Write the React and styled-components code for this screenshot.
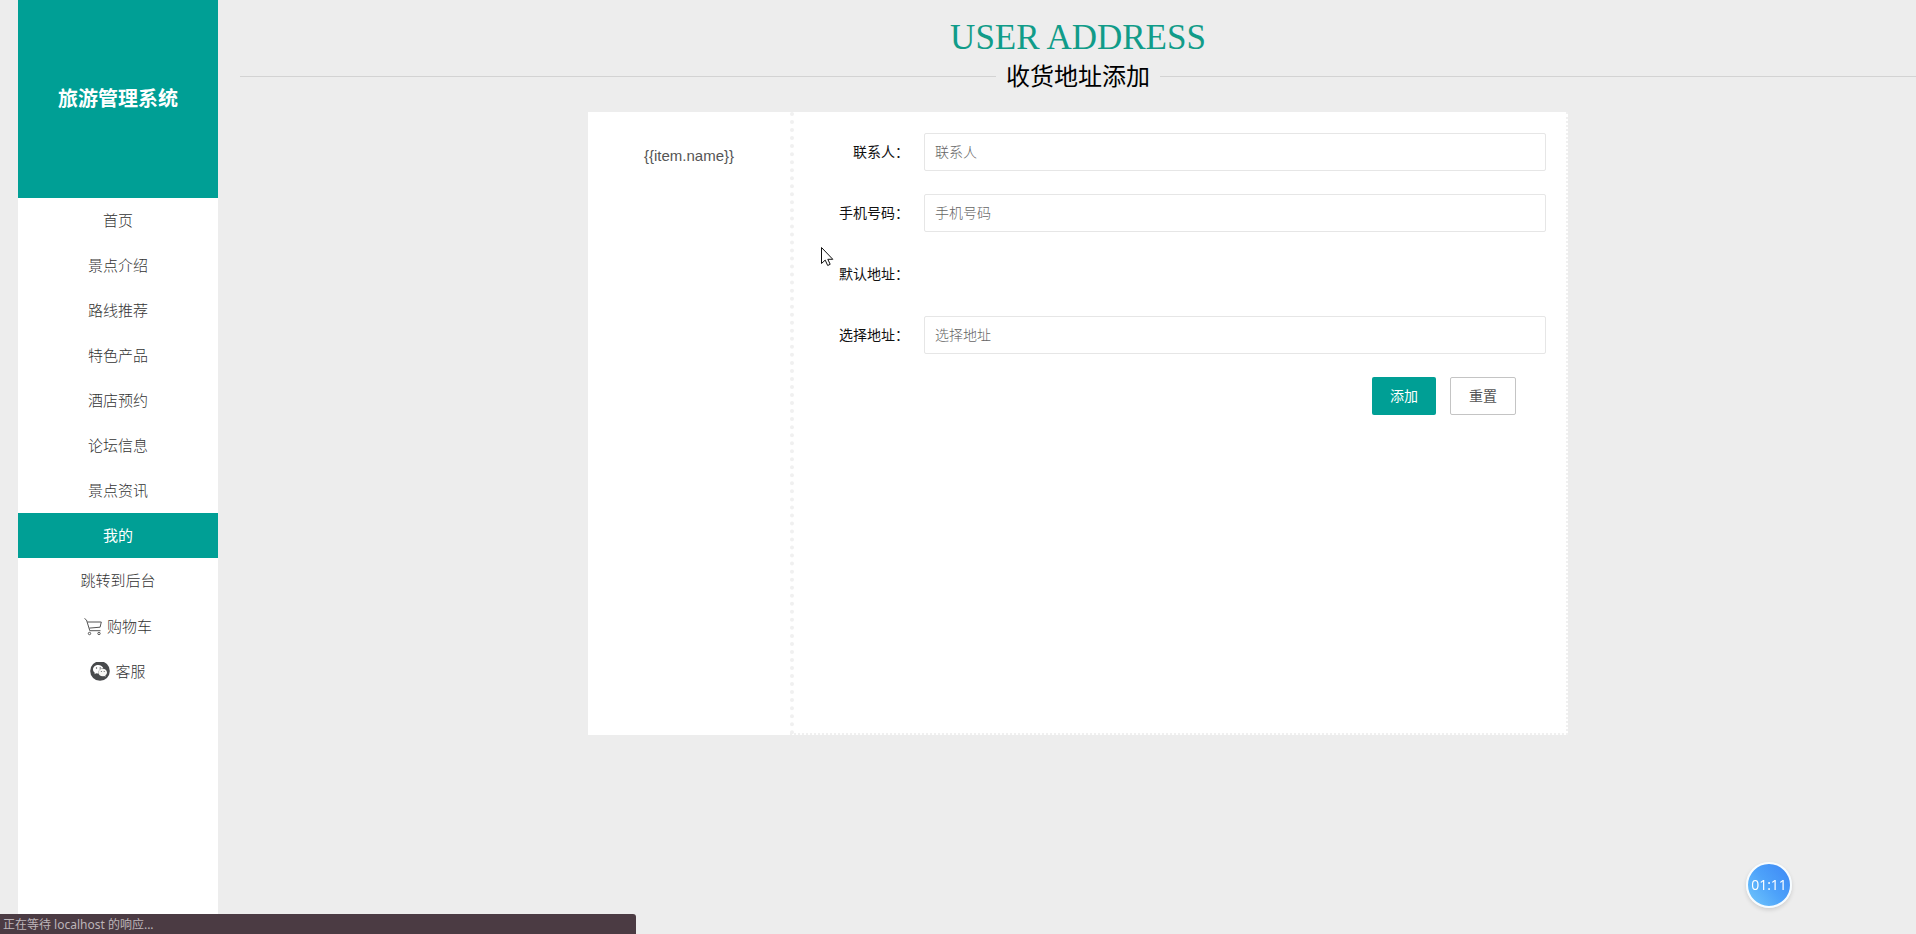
import React from "react";
import styled, { createGlobalStyle, css } from "styled-components";

const teal = "#009f95";

const GlobalStyle = createGlobalStyle`
  *, *::before, *::after { box-sizing: border-box; }
  body {
    margin: 0;
    background: #ededed;
    color: #111;
    font: 300 14px/20px "Liberation Sans", "Noto Sans CJK SC", sans-serif;
  }
  input, button { font: inherit; }
`;

const Page = styled.div`
  display: flex;
  gap: 22px;
  min-height: 100vh;
  padding-left: 18px;
`;

const Sidebar = styled.aside`
  flex: 0 0 200px;
  background: #fff;
`;

const Brand = styled.h1`
  display: flex;
  align-items: center;
  justify-content: center;
  height: 198px;
  margin: 0;
  background: ${teal};
  color: #fff;
  font-size: 20px;
  font-weight: 700;
`;

const NavLink = styled.a`
  display: flex;
  align-items: center;
  justify-content: center;
  gap: 5px;
  height: 45px;
  font-size: 15px;
  text-decoration: none;
  color: #333;
  ${({ $active }) => $active && css`
    background: ${teal};
    color: #fff;
    font-weight: 400;
  `}
`;

const ServiceNav = styled.div`
  padding-top: 1px;
`;

const Main = styled.main`
  flex: 1;
  min-width: 0;
`;

const Heading = styled.header`
  padding-top: 16px;
  text-align: center;
`;

const EnglishTitle = styled.p`
  margin: 0;
  font: 35px/44px "Liberation Serif", serif;
  color: #119c89;
`;

const TitleRow = styled.div`
  display: flex;
  align-items: center;
  gap: 10px;
  &::before, &::after {
    content: "";
    flex: 1;
    height: 1px;
    margin-bottom: 2px;
    background: #d3d3d3;
  }
`;

const Title = styled.h2`
  margin: 0;
  font-size: 24px;
  line-height: 34px;
  font-weight: 400;
  color: #000;
`;

const Card = styled.section`
  display: flex;
  max-width: 980px;
  min-height: 623px;
  margin: 18px auto 0;
  background: #fff;
`;

const Aside = styled.nav`
  flex: 0 0 202px;
  padding-top: 24px;
`;

const AsideLink = styled.a`
  display: block;
  line-height: 40px;
  text-align: center;
  color: #555;
  text-decoration: none;
  font-size: 15px;
`;

const Form = styled.form`
  display: flex;
  flex-direction: column;
  gap: 23px;
  flex: 1;
  min-width: 0;
  padding: 21px 20px 20px 15px;
  border: 2px dotted #f0f0f0;
  border-width: 0 2px 2px 4px;
`;

const Field = styled.div`
  display: flex;
  align-items: center;
  height: 38px;
`;

const Label = styled.label`
  flex: 0 0 115px;
  padding-right: 15px;
  text-align: right;
  white-space: nowrap;
  font-weight: 400;
`;

const Input = styled.input`
  flex: 1;
  min-width: 0;
  height: 38px;
  padding: 0 10px;
  border: 1px solid #e6e6e6;
  border-radius: 2px;
  background: #fff;
  outline: none;
  &::placeholder { color: #656565; opacity: 1; }
`;

const Actions = styled.div`
  display: flex;
  justify-content: flex-end;
  gap: 14px;
  padding-right: 30px;
`;

const Button = styled.button`
  height: 38px;
  padding: 0 18px;
  border: ${({ $primary }) => ($primary ? "0" : "1px solid #c4c4c4")};
  border-radius: 2px;
  background: ${({ $primary }) => ($primary ? teal : "#fff")};
  color: ${({ $primary }) => ($primary ? "#fff" : "#555")};
  font-weight: 400;
  cursor: pointer;
`;

const StatusBar = styled.div`
  position: fixed;
  left: 0;
  bottom: 0;
  width: 636px;
  max-width: 100%;
  height: 20px;
  padding-left: 3px;
  border-radius: 0 3px 0 0;
  background: #4b3b43;
  color: #bdb5b9;
  font: 12px/22px "Noto Sans", "Noto Sans CJK SC", sans-serif;
`;

const Timer = styled.div`
  position: fixed;
  right: 124px;
  bottom: 26px;
  width: 46px;
  height: 46px;
  border: 2px solid #f7fcff;
  border-radius: 50%;
  background: linear-gradient(50deg, #72c8fb, #4da2fa 50%, #3d87f5);
  box-shadow: 0 2px 4px #0002;
  color: #fff;
  font: 14px/42px "Open Sans", sans-serif;
  text-align: center;
`;

const Pointer = styled.svg`
  position: absolute;
  left: 820px;
  top: 246px;
  pointer-events: none;
`;

const CartIcon = () => (
  <svg width="18" height="18" viewBox="0 0 18 18" fill="none" stroke="#555" strokeWidth="1" aria-hidden="true">
    <path d="M.5.5 2.500 2l3.300 10.700h10.700M3.300 4h14l-1.200 5.200-10.800.9" />
    <circle cx="5.500" cy="15.500" r="1.200" />
    <circle cx="15" cy="15.500" r="1.200" />
  </svg>
);

const WechatIcon = () => (
  <svg width="20" height="20" viewBox="0 0 20 20" aria-hidden="true">
    <circle cx="10" cy="9" r="9.800" fill="#484a4c" />
    <g transform="translate(0 -1)">
      <path d="M8.3 4C5.3 4 3 5.9 3 8.4c0 1.4.7 2.5 1.9 3.3l-.5 1.5 1.8-.9c.7.2 1.5.3 2.4.3C8 9.500 10 7.300 13.300 7.200 12.700 5.300 10.700 4 8.300 4Z" fill="#fff" />
      <path d="M12.700 7.800c-2.400 0-4.300 1.600-4.300 3.700s1.900 3.700 4.300 3.700c.5 0 1-.1 1.500-.2l1.500.8-.4-1.400c1-.7 1.700-1.700 1.700-2.900 0-2.100-1.900-3.700-4.300-3.700Z" fill="#f6f6f3" />
      <g fill="#484a4c">
        <circle cx="6.500" cy="7" r=".7" /><circle cx="10.200" cy="7" r=".7" />
        <circle cx="11.300" cy="10.400" r=".5" /><circle cx="14.200" cy="10.400" r=".5" />
      </g>
    </g>
  </svg>
);

const navItems = ["首页", "景点介绍", "路线推荐", "特色产品", "酒店预约", "论坛信息", "景点资讯", "我的", "跳转到后台"];

const fields = [
  { id: "contact", label: "联系人" },
  { id: "phone", label: "手机号码" },
  { id: "isdefault", label: "默认地址", empty: true },
  { id: "address", label: "选择地址" },
];

export default function App() {
  return (
    <>
      <GlobalStyle />
      <Page>
        <Sidebar>
          <Brand>旅游管理系统</Brand>
          <nav>
            {navItems.map((name) => (
              <NavLink key={name} href="#" $active={name === "我的"}>{name}</NavLink>
            ))}
            <ServiceNav>
              <NavLink href="#"><CartIcon />购物车</NavLink>
              <NavLink href="#"><WechatIcon />客服</NavLink>
            </ServiceNav>
          </nav>
        </Sidebar>
        <Main>
          <Heading>
            <EnglishTitle>USER ADDRESS</EnglishTitle>
            <TitleRow><Title>收货地址添加</Title></TitleRow>
          </Heading>
          <Card>
            <Aside>
              <AsideLink href="#">{"{{item.name}}"}</AsideLink>
            </Aside>
            <Form onSubmit={(e) => e.preventDefault()}>
              {fields.map(({ id, label, empty }) => (
                <Field key={id}>
                  <Label as={empty ? "span" : "label"} htmlFor={empty ? undefined : id}>{label}：</Label>
                  {!empty && <Input id={id} name={id} placeholder={label} />}
                </Field>
              ))}
              <Actions>
                <Button type="submit" $primary>添加</Button>
                <Button type="reset">重置</Button>
              </Actions>
            </Form>
          </Card>
        </Main>
      </Page>
      <Timer>01:11</Timer>
      <StatusBar role="status">正在等待 localhost 的响应...</StatusBar>
      <Pointer width="14" height="21" viewBox="0 0 14 21" aria-hidden="true">
        <path d="M1.500 1.500v16l3.700-3.400 2.500 5.400 2.500-1.200-2.400-5h5Z" fill="#fff" stroke="#111" strokeWidth="1" />
      </Pointer>
    </>
  );
}
